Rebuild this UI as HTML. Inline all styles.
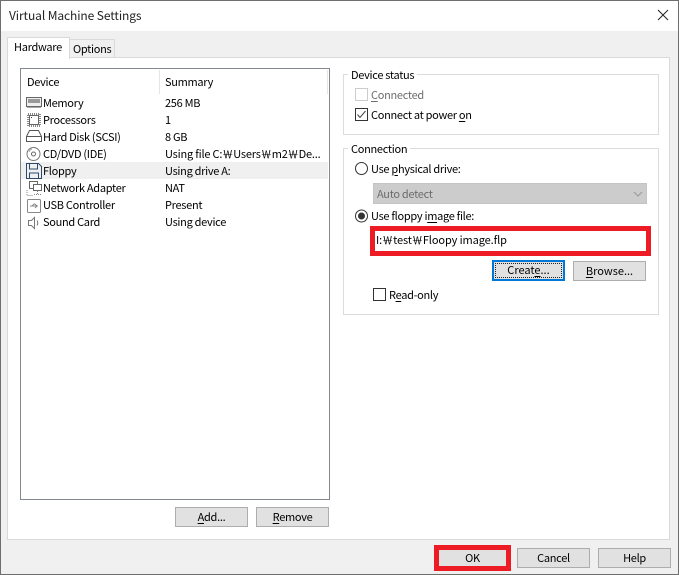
<!DOCTYPE html>
<html><head><meta charset="utf-8"><style>
html,body{margin:0;padding:0;width:679px;height:575px;overflow:hidden;background:#fff}
*{box-sizing:border-box}
#w{position:relative;width:679px;height:575px;font:11px/16px "Noto Sans CJK KR","Liberation Sans",sans-serif;letter-spacing:-.3px;color:#000;overflow:hidden}
#w div,#w span.t,#w svg{position:absolute}
.t{white-space:nowrap;position:absolute}
u{text-underline-offset:2px}
i{font-style:normal;letter-spacing:0}
.btn{background:#e1e1e1;border:1px solid #adadad;text-align:center;line-height:18px;height:20px;width:73px;white-space:nowrap}
.cb{width:13px;height:13px;border:1px solid #333;background:#fff}
.group{border:1px solid #dcdcdc}
.lg{background:#fff;padding:0 3px;white-space:nowrap}
</style></head><body><div id="w">
<div style="left:0;top:0;width:679px;height:575px;background:#f0f0f0"></div>
<div style="left:0;top:0;width:679px;height:31px;background:#fff"></div>
<div style="left:0;top:0;width:679px;height:1px;background:#6e6e6e"></div>
<div style="left:0;top:0;width:1px;height:575px;background:#6e6e6e"></div>
<div style="left:678px;top:0;width:1px;height:575px;background:#6e6e6e"></div>
<div style="left:0;top:574px;width:679px;height:1px;background:#6e6e6e"></div>
<span class="t" style="left:9px;top:8px;font-size:12px;letter-spacing:-.1px;color:#222">Virtual Machine Settings</span>
<svg style="left:657px;top:9px" width="12" height="12" viewBox="0 0 12 12"><path d="M1 1L11 11M11 1L1 11" stroke="#222" stroke-width="1" fill="none"/></svg>

<div style="left:7px;top:57px;width:663px;height:483px;background:#fff;border:1px solid #d9d9d9"></div>
<div style="left:69px;top:39px;width:46px;height:19px;background:#f0f0f0;border:1px solid #d9d9d9"></div>
<span class="t" style="left:73px;top:41px">Options</span>
<div style="left:7px;top:37px;width:63px;height:22px;background:#fff;border:1px solid #d9d9d9;border-bottom:0"></div>
<span class="t" style="left:14px;top:39px">Hardware</span>

<div style="left:20px;top:68px;width:310px;height:432px;background:#fff;border:1px solid #828790"></div>
<div style="left:159px;top:70px;width:1px;height:24px;background:#e5e5e5"></div>
<div style="left:327px;top:70px;width:1px;height:24px;background:#e5e5e5"></div>
<span class="t" style="left:27px;top:74px">Device</span>
<span class="t" style="left:165px;top:74px">Summary</span>
<div style="left:21px;top:162px;width:307px;height:17px;background:#f0f0f0"></div>

<svg style="left:26px;top:96px" width="17" height="136" viewBox="0 0 17 136" fill="none" stroke="#666" stroke-width="1">
<rect x="0.5" y="1.5" width="15" height="9" fill="#eee"/><path d="M2 4h12M2 6h12" stroke="#999" stroke-width="2"/><path d="M1 11.500h14" stroke="#aaa"/>
<rect x="2" y="18" width="12" height="12" stroke="#888" stroke-width="2" stroke-dasharray="1 1"/><rect x="3.500" y="19.500" width="9" height="9" fill="#fff" stroke="#666"/><rect x="5" y="21" width="1" height="1" fill="#333" stroke="none"/>
<path d="M3.500 34.500h9l3 6v5h-15v-5zM1 40.500h14" stroke="#555"/>
<circle cx="7.500" cy="58" r="6.500" stroke="#777"/><circle cx="7.500" cy="58" r="2"/><path d="M3 56a5 5 0 0 1 3-3" stroke="#aaa"/>
<path d="M0.500 67.500h12l3 3v12h-15z" stroke="#2c4a6e"/><path d="M3.500 68v5h8v-5M3.500 83v-6h9v6" stroke="#2c4a6e"/>
<rect x="3.500" y="85.500" width="8" height="7" fill="#fff"/><rect x="7.500" y="88.500" width="8" height="6" fill="#fff"/><path d="M11.500 95v3M8 98.500h7M1 94v5.500h6" stroke="#888" stroke-dasharray="1 1"/>
<rect x="1.500" y="103.500" width="13" height="13" rx="1" stroke="#888"/><path d="M4 110h8M9 108l2 2-2 2M6 110l2-2h1" stroke="#888"/>
<path d="M2.500 124.500h3l3-3v11l-3-3h-3zM11 124.500q1.500 2.500 0 5" stroke="#777"/>
</svg>

<span class="t" style="left:43px;top:95px">Memory</span><span class="t" style="left:165px;top:95px">256 MB</span>
<span class="t" style="left:43px;top:112px">Processors</span><span class="t" style="left:165px;top:112px">1</span>
<span class="t" style="left:43px;top:129px">Hard Disk (SCSI)</span><span class="t" style="left:165px;top:129px">8 GB</span>
<span class="t" style="left:43px;top:146px">CD/DVD (IDE)</span><span class="t" style="left:165px;top:146px;letter-spacing:-.2px">Using file C:<i>￦</i>Users<i>￦</i>m2<i>￦</i>De...</span>
<span class="t" style="left:43px;top:163px">Floppy</span><span class="t" style="left:165px;top:163px">Using drive A:</span>
<span class="t" style="left:43px;top:180px">Network Adapter</span><span class="t" style="left:165px;top:180px">NAT</span>
<span class="t" style="left:43px;top:197px">USB Controller</span><span class="t" style="left:165px;top:197px">Present</span>
<span class="t" style="left:43px;top:214px">Sound Card</span><span class="t" style="left:165px;top:214px">Using device</span>

<div class="btn" style="left:175px;top:507px"><u>A</u>dd...</div>
<div class="btn" style="left:256px;top:507px"><u>R</u>emove</div>

<div class="group" style="left:343px;top:74px;width:316px;height:61px"></div>
<span class="t lg" style="left:348px;top:67px">Device status</span>
<div class="cb" style="left:355px;top:88px;border-color:#ccc"></div>
<span class="t" style="left:371px;top:87px;color:#6d6d6d"><u>C</u>onnected</span>
<div class="cb" style="left:355px;top:108px"></div>
<svg style="left:355px;top:108px" width="13" height="13"><path d="M2.500 6.500L5 9.500L10.500 3" stroke="#444" fill="none"/></svg>
<span class="t" style="left:371px;top:107px">Connect at power <u>o</u>n</span>

<div class="group" style="left:343px;top:148px;width:316px;height:167px"></div>
<span class="t lg" style="left:348px;top:141px">Connection</span>
<svg style="left:355px;top:162px" width="13" height="61"><circle cx="6.500" cy="6.500" r="6" fill="#fff" stroke="#333"/><circle cx="6.500" cy="54" r="6" fill="#fff" stroke="#333"/><circle cx="6.500" cy="54" r="3.500" fill="#333"/></svg>
<span class="t" style="left:371px;top:161px">Use <u>p</u>hysical drive:</span>
<div style="left:373px;top:183px;width:274px;height:21px;background:#ccc;border:1px solid #c4c4c4"></div>
<span class="t" style="left:377px;top:186px;color:#6d6d6d">Auto detect</span>
<svg style="left:633px;top:191px" width="10" height="6"><path d="M1 1L5 5L9 1" stroke="#999" fill="none"/></svg>
<span class="t" style="left:371px;top:208px">Use floppy i<u>m</u>age file:</span>

<div style="left:370px;top:226px;width:281px;height:30px;background:#fff;border:5px solid #ed1c24"></div>
<span class="t" style="left:376px;top:232px;letter-spacing:-.1px">I:<i>￦</i>test<i>￦</i>Floopy image.flp</span>

<div class="btn" style="left:492px;top:260px;width:73px;height:21px;border:2px solid #0078d7;line-height:17px;letter-spacing:0">Creat<u>e</u>...</div>
<div style="left:495px;top:263px;width:67px;height:15px;border:1px dotted #222"></div>
<div class="btn" style="left:573px;top:261px;letter-spacing:0"><u>B</u>rowse...</div>
<div class="cb" style="left:373px;top:288px"></div>
<span class="t" style="left:389px;top:287px">R<u>e</u>ad-only</span>

<div class="btn" style="left:439px;top:549px;width:67px;height:19px;border:0">OK</div>
<div style="left:434px;top:545px;width:77px;height:26px;border:5px solid #ed1c24"></div>
<div class="btn" style="left:517px;top:548px">Cancel</div>
<div class="btn" style="left:598px;top:548px">Help</div>
</div></body></html>
